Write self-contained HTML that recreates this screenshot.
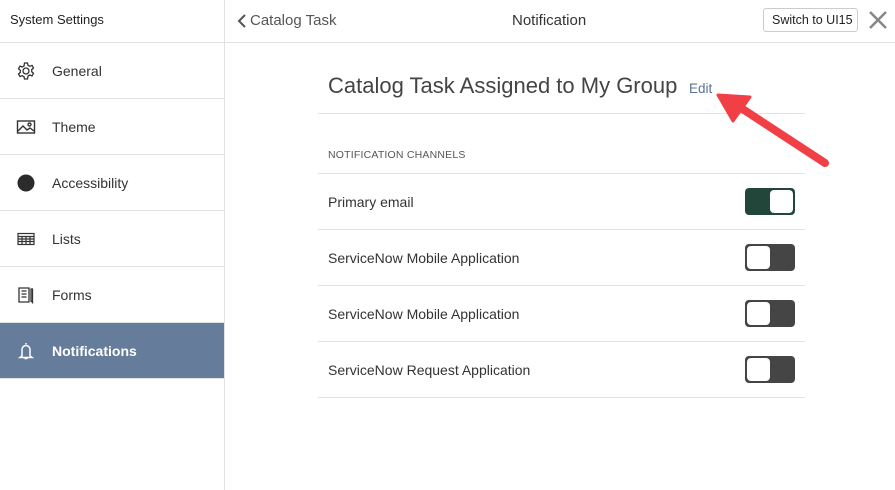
<!DOCTYPE html>
<html><head><style>
*{margin:0;padding:0;box-sizing:border-box}
body{width:895px;height:490px;background:#fff;font-family:"Liberation Sans",sans-serif;position:relative;overflow:hidden;color:#333}
.side{position:absolute;left:0;top:0;width:225px;height:490px;border-right:1px solid #e2e2e2}
.hdr{height:43px;border-bottom:1px solid #e2e2e2;font-size:13px;padding:12px 0 0 10px;color:#222}
.item{height:56px;border-bottom:1px solid #e2e2e2;position:relative;font-size:14px;color:#333}
.item span{position:absolute;left:52px;top:20px}
.item svg{position:absolute;left:16px;top:18px}
.act{background:#667c9b;color:#fff;font-weight:bold}
.top{position:absolute;left:225px;top:0;right:0;height:43px;border-bottom:1px solid #e2e2e2}
.row{position:absolute;left:318px;width:487px;border-bottom:1px solid #e2e2e2}
.tog{position:absolute;left:745px;width:50px;height:27px;border-radius:4px;background:#454545}
.tog i{position:absolute;top:2px;left:2px;width:23px;height:23px;border-radius:4px;background:#fff}
.rl{position:absolute;left:328px;font-size:14px;color:#333}
</style></head><body>
<div class="side">
<div class="hdr">System Settings</div>
<div class="item"><svg width="20" height="20" viewBox="0 0 20 20" fill="none" stroke="#333" stroke-width="1.3"><circle cx="10" cy="10" r="3"/><path d="M8.5 2h3l.5 2.3 1.8 1 2.2-.9 1.5 2.6-1.8 1.6v2.1l1.8 1.6-1.5 2.6-2.2-.9-1.8 1L11.5 18h-3L8 15.7l-1.8-1-2.2.9-1.5-2.6 1.8-1.6V9.3L2.5 7.7 4 5.1l2.2.9 1.8-1z"/></svg><span>General</span></div>
<div class="item"><svg width="20" height="20" viewBox="0 0 20 20" fill="none" stroke="#333" stroke-width="1.4"><rect x="1.5" y="4" width="17" height="12"/><path d="M2 14l5-5 4 4 3-2 4 3"/><circle cx="13.5" cy="7.5" r="1.5"/></svg><span>Theme</span></div>
<div class="item"><svg width="20" height="20" viewBox="0 0 20 20"><circle cx="10" cy="10" r="8.5" fill="#2b2b2b"/></svg><span>Accessibility</span></div>
<div class="item"><svg width="20" height="20" viewBox="0 0 20 20" fill="none" stroke="#333" stroke-width="1.2"><rect x="2" y="4.5" width="16" height="11"/><path d="M2 7.5h16M2 10h16M2 12.5h16M6 7.5v8M10 7.5v8M14 7.5v8"/></svg><span>Lists</span></div>
<div class="item"><svg width="20" height="20" viewBox="0 0 20 20" fill="none" stroke="#333" stroke-width="1.3"><path d="M3 3h10v14H3zM5.5 6h5M5.5 9h5M5.5 12h5M15 4v12l1.5 1.5V4z"/></svg><span>Forms</span></div>
<div class="item act"><svg width="20" height="20" viewBox="0 0 20 20" fill="none" stroke="#fff" stroke-width="1.5"><path d="M10 2v1.5M6 15V8.5a4 4 0 018 0V15l2 1.5H4zM8.5 17.5h3"/></svg><span>Notifications</span></div>
</div>
<div class="top">
<svg style="position:absolute;left:12px;top:14px" width="10" height="14" viewBox="0 0 10 14"><path d="M8 1L2 7l6 6" fill="none" stroke="#555" stroke-width="2"/></svg>
<div style="position:absolute;left:25px;top:12px;font-size:15px;color:#555">Catalog Task</div>
<div style="position:absolute;left:287px;top:12px;font-size:15px;color:#333">Notification</div>
<div style="position:absolute;left:538px;top:8px;width:95px;height:24px;border:1px solid #ccc;border-radius:3px;font-size:12.5px;padding:4px 0 0 8px;color:#222">Switch to UI15</div>
<svg style="position:absolute;left:643px;top:10px" width="20" height="20" viewBox="0 0 20 20"><path d="M2 2l16 16M18 2L2 18" stroke="#888" stroke-width="2.6"/></svg>
</div>
<div style="position:absolute;left:328px;top:73px;font-size:22px;color:#444">Catalog Task Assigned to My Group</div>
<div style="position:absolute;left:689px;top:81px;font-size:13.5px;color:#5b7295">Edit</div>
<div class="row" style="top:113px;height:1px"></div>
<div style="position:absolute;left:328px;top:149px;font-size:10.5px;color:#555;letter-spacing:.2px">NOTIFICATION CHANNELS</div>
<div class="row" style="top:173px;height:1px"></div>
<div class="row" style="top:229px;height:1px"></div>
<div class="row" style="top:285px;height:1px"></div>
<div class="row" style="top:341px;height:1px"></div>
<div class="row" style="top:397px;height:1px"></div>
<div class="rl" style="top:194px">Primary email</div>
<div class="rl" style="top:250px">ServiceNow Mobile Application</div>
<div class="rl" style="top:306px">ServiceNow Mobile Application</div>
<div class="rl" style="top:362px">ServiceNow Request Application</div>
<div class="tog" style="top:188px;background:#22473a"><i style="left:25px"></i></div>
<div class="tog" style="top:244px"><i></i></div>
<div class="tog" style="top:300px"><i></i></div>
<div class="tog" style="top:356px"><i></i></div>
<svg style="position:absolute;left:0;top:0" width="895" height="490"><path d="M825 163L738 106" stroke="#f04045" stroke-width="8" stroke-linecap="round"/><path d="M718 95L750 97L733 121Z" fill="#f04045" stroke="#f04045" stroke-width="3" stroke-linejoin="round"/></svg>
</body></html>
